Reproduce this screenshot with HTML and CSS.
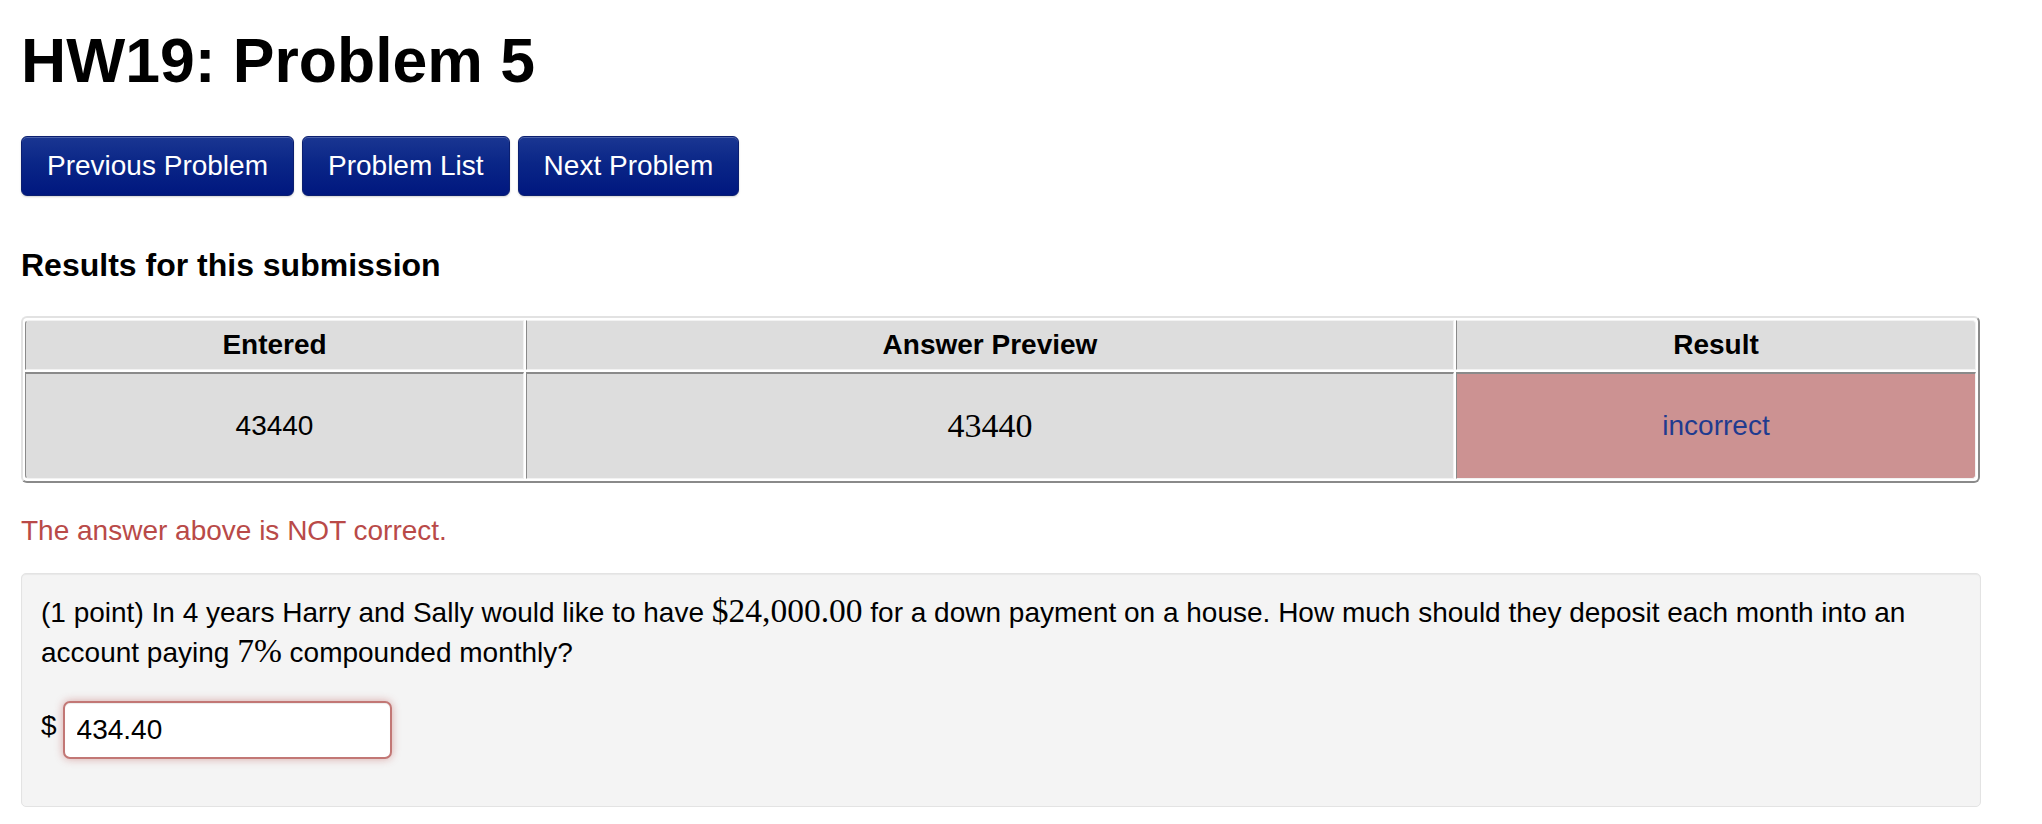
FILE: index.html
```html
<!DOCTYPE html>
<html lang="en">
<head>
<meta charset="utf-8">
<title>HW19: Problem 5</title>
<link rel="stylesheet" href="styles.css">
</head>
<body>
<div class="page">
  <h1 class="title">HW19: Problem 5</h1>
  <nav class="nav-buttons">
    <a class="btn" href="#">Previous Problem</a>
    <a class="btn" href="#">Problem List</a>
    <a class="btn" href="#">Next Problem</a>
  </nav>
  <h2 class="results-title">Results for this submission</h2>
  <table class="attempt-results">
    <colgroup>
      <col class="col-entered">
      <col class="col-preview">
      <col class="col-result">
    </colgroup>
    <tr>
      <th class="corner-tl">Entered</th>
      <th>Answer Preview</th>
      <th class="corner-tr">Result</th>
    </tr>
    <tr>
      <td class="corner-bl">43440</td>
      <td><span class="math preview-math">43440</span></td>
      <td class="result-bad corner-br">incorrect</td>
    </tr>
  </table>
  <p class="feedback-error">The answer above is NOT correct.</p>
  <div class="problem-well">
    <p class="problem-text">(1 point) In 4 years Harry and Sally would like to have <span class="math">$24,000.00</span> for a down payment on a house. How much should they deposit each month into an account paying <span class="math">7%</span> compounded monthly?</p>
    <div class="answer-row">
      <span class="dollar">$</span>
      <input class="answer-input" type="text" value="434.40">
    </div>
  </div>
</div>
</body>
</html>
```
FILE: styles.css
```css
html, body {
  margin: 0;
  padding: 0;
  background: #ffffff;
}

body {
  font-family: "Liberation Sans", Arial, Helvetica, sans-serif;
  font-size: 28px;
  line-height: 40px;
  color: #000000;
}

.page {
  padding: 25px 0 0 21px;
  width: 1960px;
}

.title {
  margin: 0;
  font-size: 62.5px;
  line-height: 70px;
  font-weight: bold;
}

.nav-buttons {
  margin-top: 41px;
  display: flex;
  gap: 8px;
}

.btn {
  box-sizing: border-box;
  height: 60px;
  line-height: 58px;
  padding: 0 25px;
  font-size: 28px;
  color: #ffffff;
  text-decoration: none;
  border: 1px solid #0b1f70;
  border-radius: 6px;
  background: linear-gradient(to bottom, #1a3692 0%, #0a2687 45%, #00177f 100%);
  box-shadow: inset 0 1px 0 rgba(255, 255, 255, 0.22), 0 1px 2px rgba(0, 0, 0, 0.18);
}

.results-title {
  margin: 50px 0 0;
  font-size: 32px;
  line-height: 38px;
  font-weight: bold;
}

.attempt-results {
  margin-top: 32px;
  width: 1959px;
  table-layout: fixed;
  border-collapse: separate;
  border-spacing: 2px;
  border: 2px solid;
  border-color: #e2e2e2 #8a8a8a #8a8a8a #e2e2e2;
  border-radius: 6px;
}

.col-entered { width: 499px; }
.col-preview { width: 928px; }

.attempt-results th,
.attempt-results td {
  box-sizing: border-box;
  background: #dddddd;
  text-align: center;
  padding: 0 8px;
  border: 1px solid;
  border-color: #f2f2f2 #f2f2f2 #f2f2f2 #8a8a8a;
}

.attempt-results th {
  height: 50px;
  font-weight: bold;
  line-height: 32px;
}

.attempt-results td {
  height: 107px;
  border-top: 2px solid #8a8a8a;
  line-height: 32px;
}

.attempt-results .result-bad {
  background: #cc9292;
  color: #1f3b8f;
}

.corner-tl { border-top-left-radius: 4px; }
.corner-tr { border-top-right-radius: 4px; }
.corner-bl { border-bottom-left-radius: 4px; }
.corner-br { border-bottom-right-radius: 4px; }

.math {
  font-family: "Liberation Serif", "Times New Roman", serif;
  font-size: 33.5px;
  line-height: 1;
}

.preview-math {
  font-size: 34px;
}

.feedback-error {
  margin: 28px 0 0;
  color: #b94a48;
}

.problem-well {
  margin-top: 22px;
  box-sizing: border-box;
  width: 1960px;
  padding: 19px;
  background: #f4f4f4;
  border: 1px solid #e3e3e3;
  border-radius: 5px;
  box-shadow: inset 0 1px 1px rgba(0, 0, 0, 0.05);
}

.problem-text {
  margin: 0;
}

.answer-row {
  margin: 28px 0;
  display: flex;
  align-items: flex-start;
  gap: 6px;
}

.dollar {
  margin-top: 5px;
}

.answer-input {
  box-sizing: border-box;
  width: 329px;
  height: 58px;
  margin: 0;
  padding: 0 12px;
  font-family: "Liberation Sans", Arial, Helvetica, sans-serif;
  font-size: 28px;
  color: #000000;
  background: #ffffff;
  border: 2px solid #c27775;
  border-radius: 7px;
  box-shadow: inset 0 1px 1px rgba(0, 0, 0, 0.075), 0 0 9px rgba(185, 74, 72, 0.45);
  outline: none;
}
```
